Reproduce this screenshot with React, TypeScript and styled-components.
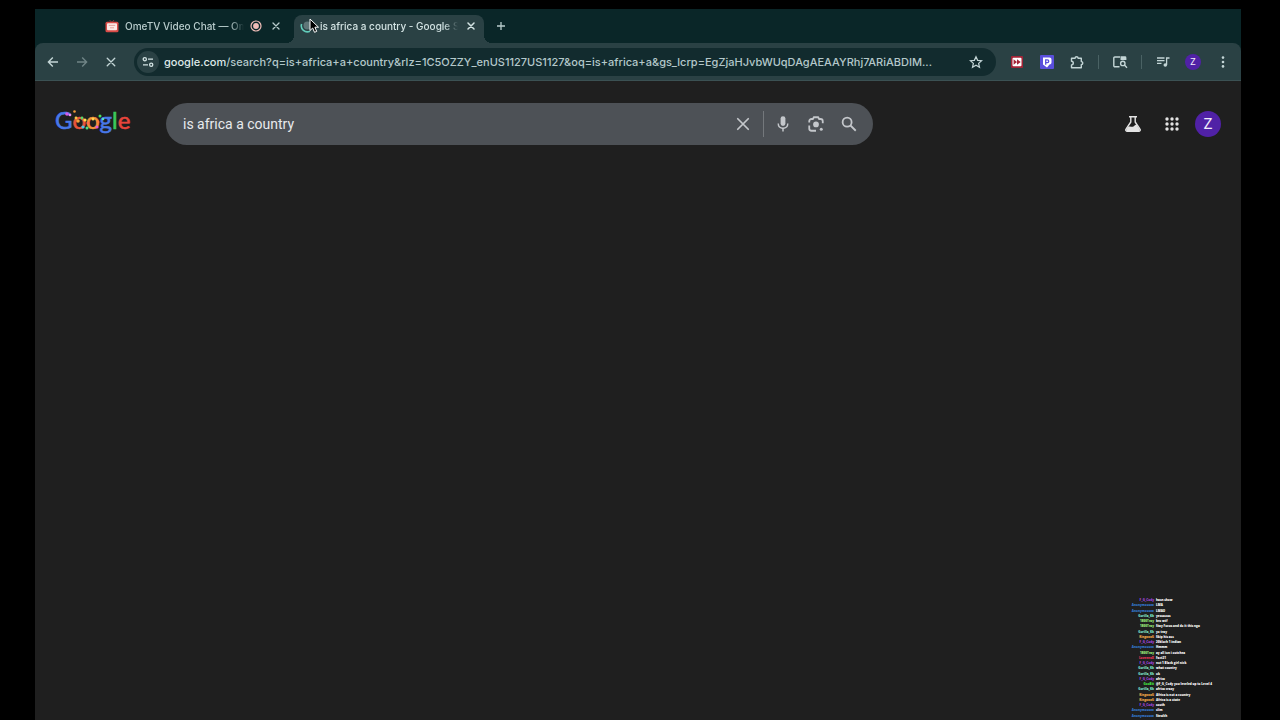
import React from "react";
import styled, { createGlobalStyle, css } from "styled-components";

const Global = createGlobalStyle`
  * { box-sizing: border-box; }
  html, body { margin: 0; background: #000; }
  body { font-family: Inter, "Liberation Sans", sans-serif; }
  button, input { font: inherit; color: inherit; border: 0; padding: 0; margin: 0; background: none; }
  button { cursor: pointer; }
  svg { display: block; flex: none; }
`;

const Screen = styled.div`
  position: relative;
  display: flex;
  flex-direction: column;
  min-height: 100vh;
  padding: 9px 39px 0 35px;
  overflow: hidden;
`;

const BrowserWindow = styled.div`
  flex: 1;
  display: flex;
  flex-direction: column;
  background: #0a2628;
`;

const TabStrip = styled.div`
  display: flex;
  height: 34px;
  padding: 6px 0 0 64px;
`;

const Tab = styled.div<{ $active?: boolean }>`
  position: relative;
  display: flex;
  align-items: center;
  width: 190px;
  padding: 0 5px 6px 6px;
  color: ${(p) => (p.$active ? "#d3e3e3" : "#b9cccc")};
  ${(p) =>
    p.$active
      ? css`
          margin-left: 5px;
          border-radius: 8px 8px 0 0;
          background: #2a4144;
          &::before,
          &::after {
            content: "";
            position: absolute;
            bottom: 0;
            width: 8px;
            height: 8px;
          }
          &::before {
            right: 100%;
            background: radial-gradient(circle at 0 0, transparent 8px, #2a4144 8px);
          }
          &::after {
            left: 100%;
            background: radial-gradient(circle at 100% 0, transparent 8px, #2a4144 8px);
          }
        `
      : ""}
`;

const TabTitle = styled.span<{ $gap?: number }>`
  flex: 1;
  min-width: 0;
  margin: 0 ${(p) => p.$gap ?? 0}px 0 6px;
  overflow: hidden;
  white-space: nowrap;
  font-size: 10px;
  font-weight: 500;
  line-height: 16px;
  mask-image: linear-gradient(to right, #000 calc(100% - 14px), transparent);
`;

const IconButton = styled.button<{ $w?: number; $dim?: boolean }>`
  display: flex;
  align-items: center;
  justify-content: center;
  width: ${(p) => p.$w ?? 20}px;
  height: 20px;
  flex: none;
  opacity: ${(p) => (p.$dim ? 0.45 : 1)};
`;

const NewTabButton = styled(IconButton)`
  width: 34px;
  height: 22px;
  color: #b9cccc;
`;

const Toolbar = styled.div`
  display: flex;
  align-items: center;
  height: 38px;
  padding: 0 8px;
  border-bottom: 1px solid #3b5153;
  border-radius: 8px 8px 0 0;
  background: #2a4144;
  color: #c3d5d6;
`;

const NavButtons = styled.div`
  display: flex;
  gap: 9px;
  margin-right: 13px;
`;

const AddressBar = styled.div`
  flex: 1;
  min-width: 0;
  display: flex;
  align-items: center;
  height: 28px;
  padding: 0 10px 0 3px;
  border-radius: 14px;
  background: #122b2e;
`;

const SiteInfo = styled.button`
  display: flex;
  align-items: center;
  justify-content: center;
  width: 22px;
  height: 22px;
  border-radius: 50%;
  background: #2a4144;
  flex: none;
`;

const Url = styled.span`
  flex: 1;
  min-width: 0;
  margin: 0 6px 0 5px;
  overflow: hidden;
  white-space: nowrap;
  font-size: 11px;
  font-weight: 500;
  line-height: 18px;
  color: #b4c8ca;
  b { font-weight: 500; color: #dfe9e9; }
`;

const Extensions = styled.div`
  display: flex;
  align-items: center;
  gap: 10px;
  margin-left: 11px;
`;

const ToolbarRule = styled.span`
  width: 1px;
  height: 14px;
  margin: 0 1px;
  background: #4a6264;
  flex: none;
`;

const Avatar = styled.button<{ $large?: boolean }>`
  width: ${(p) => (p.$large ? 26 : 16)}px;
  height: ${(p) => (p.$large ? 26 : 16)}px;
  margin: ${(p) => (p.$large ? "0" : "0 2px")};
  border-radius: 50%;
  background: #5021a6;
  color: #f1ecfa;
  font-family: Roboto, "Liberation Sans", sans-serif;
  font-size: ${(p) => (p.$large ? 15 : 9)}px;
  text-align: center;
  flex: none;
`;

const Page = styled.main`
  flex: 1;
  background: #1f1f1f;
`;

const SearchHeader = styled.header`
  display: flex;
  align-items: center;
  padding: 22px 20px 0 20px;
`;

const LogoLink = styled.a`
  width: 80px;
  margin-right: 31px;
  flex: none;
`;

const SearchForm = styled.form`
  display: flex;
  align-items: center;
  flex: 0 1 707px;
  min-width: 0;
  height: 42px;
  padding: 0 14px 0 17px;
  border-radius: 21px;
  background: #4d5156;
  color: #c4c7cb;
`;

const SearchInput = styled.input`
  flex: 1;
  min-width: 0;
  font-family: Roboto, "Liberation Sans", sans-serif;
  font-size: 14px;
  line-height: 20px;
  color: #e8eaed;
  outline: none;
`;

const ClearGroup = styled.div`
  display: flex;
  align-items: center;
  padding-right: 10px;
  margin-right: 9px;
  border-right: 1px solid #74787c;
  height: 26px;
`;

const SearchTools = styled.div`
  display: flex;
  align-items: center;
  gap: 13px;
`;

const Account = styled.div`
  display: flex;
  align-items: center;
  gap: 11px;
  margin-left: auto;
  color: #e3e3e3;
`;

const Chat = styled.div`
  position: absolute;
  right: 40px;
  bottom: 1px;
  display: grid;
  grid-template-columns: 54px 84px;
  grid-template-rows: repeat(23, 1fr);
  column-gap: 2px;
  width: 140px;
  height: 121px;
  font-family: "Open Sans", sans-serif;
  font-size: 3px;
  font-weight: 800;
  line-height: 5px;
  white-space: nowrap;
`;

const ChatName = styled.span<{ $c: string }>`
  text-align: right;
  color: ${(p) => p.$c};
`;

const ChatText = styled.span`
  color: #fff;
`;

const Cursor = styled.svg`
  position: absolute;
  left: 309px;
  top: 18px;
`;

const purple = "#a848e0";
const blue = "#3478d4";
const teal = "#7fe8d0";
const green = "#9bee7a";
const orange = "#f8a848";
const red = "#f0385a";
const lime = "#43f043";

const messages: [string, string, string][] = [
  ["F_G_Cody", "hasn show", purple],
  ["Anonymousxx", "LMA", blue],
  ["Anonymousxx", "LMAO", blue],
  ["Gorilla_Kb", "yesssssss", teal],
  ["1800Tray", "bro wtf", green],
  ["1800Tray", "Stay Focus and do it this nga", green],
  ["Gorilla_Kb", "yo tray", teal],
  ["KingxxxG", "Skip his ass", orange],
  ["F_G_Cody", "20bloch 1 indian", purple],
  ["Anonymousxx", "Hmmm", blue],
  ["1800Tray", "ay all ion i outchea", green],
  ["LoveeexX", "Fact21", red],
  ["F_G_Cody", "not 1 Black girl nick", purple],
  ["Gorilla_Kb", "what country", teal],
  ["Gorilla_Kb", "ok", teal],
  ["F_G_Cody", "africa", purple],
  ["GooBit", "@F_G_Cody you leveled up to Level 4", lime],
  ["Gorilla_Kb", "africa crazy", teal],
  ["KingxxxG", "Africa is not a country", orange],
  ["KingxxxG", "Africa is a state", orange],
  ["F_G_Cody", "south", purple],
  ["Anonymousxx", "slim", blue],
  ["Anonymousxx", "Stealth", blue],
];

const Close = ({ size = 8, w = 1.3 }: { size?: number; w?: number }) => (
  <svg width={size} height={size} viewBox="0 0 8 8" fill="none" stroke="currentColor" strokeWidth={w} strokeLinecap="round">
    <path d="M1 1l6 6M7 1L1 7" />
  </svg>
);

const Arrow = ({ flip }: { flip?: boolean }) => (
  <svg width="12" height="12" viewBox="0 0 12 12" fill="none" stroke="currentColor" strokeWidth="1.4">
    <path d={flip ? "M1 6h9.4M6.2 1.6L10.6 6l-4.4 4.4" : "M11 6H1.6M5.8 1.6L1.4 6l4.4 4.4"} />
  </svg>
);

const Dots = () => (
  <svg width="4" height="14" viewBox="0 0 4 14" fill="currentColor">
    <circle cx="2" cy="2.6" r="1.3" />
    <circle cx="2" cy="7" r="1.3" />
    <circle cx="2" cy="11.4" r="1.3" />
  </svg>
);

const sparks: [number, number, number, string][] = [
  [12, 6, 1.8, "#d65ae8"],
  [15, 7, 1.3, "#f08cf0"],
  [19.5, 3.5, 1.3, "#f39a3a"],
  [21, 10, 1.4, "#f5c542"],
  [23, 13, 1.8, "#f5a03a"],
  [27, 10, 1.4, "#5ad86a"],
  [30, 12, 1.6, "#ffe14d"],
  [28, 19, 1.6, "#49c7e8"],
  [33, 15, 1.5, "#ff6a4d"],
  [32, 20, 1.5, "#4de07a"],
  [38, 11, 1.5, "#ffd24d"],
  [42, 19, 1.6, "#e85ad0"],
  [45, 8, 1.5, "#4de05a"],
  [48, 11, 1.3, "#59e0c0"],
  [43, 14, 1.4, "#ff7a3a"],
];

const Logo = () => (
  <svg width="80" height="32" viewBox="0 0 80 32" role="img" aria-label="Google">
    <text x="0" y="21" fontFamily="Lato, sans-serif" fontSize="24" fill="#4878e8" stroke="#4878e8" strokeWidth="0.6">
      G<tspan fill="#e8553c" stroke="#e8553c">o</tspan>
      <tspan fill="#f3923a" stroke="#f3923a">o</tspan>
      <tspan>g</tspan>
      <tspan fill="#3cc95a" stroke="#3cc95a">l</tspan>
      <tspan fill="#e8453c" stroke="#e8453c">e</tspan>
    </text>
    {sparks.map(([x, y, r, c], i) => (
      <circle key={i} cx={x} cy={y} r={r} fill={c} />
    ))}
  </svg>
);

export default function App() {
  return (
    <>
      <Global />
      <Screen>
        <BrowserWindow>
          <TabStrip>
            <Tab>
              <svg width="14" height="14" viewBox="0 0 14 14">
                <path d="M4.5 1L7 3.5 9 1" stroke="#8a3434" fill="none" />
                <rect x="0.5" y="2.8" width="13" height="10.4" rx="1.5" fill="#d94b47" />
                <rect x="2" y="4.2" width="10" height="7" rx="1" fill="#fbe9e6" />
                <path d="M3.8 6.4h6.4M5 8.8h4" stroke="#e09a94" strokeWidth="0.9" />
              </svg>
              <TabTitle>OmeTV Video Chat — OmeTV</TabTitle>
              <IconButton $w={24} aria-label="Tab is recording">
                <svg width="12" height="12" viewBox="0 0 12 12">
                  <circle cx="6" cy="6" r="5" fill="none" stroke="#f0bdb8" strokeWidth="1.2" />
                  <circle cx="6" cy="6" r="2.9" fill="#f0bdb8" />
                </svg>
              </IconButton>
              <IconButton $w={16} aria-label="Close tab"><Close /></IconButton>
            </Tab>
            <Tab $active>
              <svg width="14" height="14" viewBox="0 0 14 14" fill="none">
                <circle cx="7.5" cy="6.5" r="4" fill="#5f7678" />
                <path d="M1.6 5A6 6 0 0 0 10 12.2" stroke="#62cdbb" strokeWidth="1.6" />
              </svg>
              <TabTitle $gap={5}>is africa a country - Google Search</TabTitle>
              <IconButton $w={16} aria-label="Close tab"><Close w={1.5} /></IconButton>
            </Tab>
            <NewTabButton aria-label="New tab">
              <svg width="10" height="10" viewBox="0 0 10 10" stroke="currentColor" strokeWidth="1.3"><path d="M5 1v8M1 5h8" /></svg>
            </NewTabButton>
          </TabStrip>
          <Toolbar>
            <NavButtons>
              <IconButton aria-label="Back"><Arrow /></IconButton>
              <IconButton aria-label="Forward" $dim><Arrow flip /></IconButton>
              <IconButton aria-label="Stop"><Close size={10} w={1.1} /></IconButton>
            </NavButtons>
            <AddressBar>
              <SiteInfo aria-label="View site information">
                <svg width="12" height="12" viewBox="0 0 12 12" fill="none" stroke="#d3e3e3" strokeWidth="1.3">
                  <circle cx="2.8" cy="3.2" r="1.6" /><path d="M6 3.2h5M1 8.8h5" /><circle cx="9.2" cy="8.8" r="1.6" />
                </svg>
              </SiteInfo>
              <Url><b>google.com</b>/search?q=is+africa+a+country&amp;rlz=1C5OZZY_enUS1127US1127&amp;oq=is+africa+a&amp;gs_lcrp=EgZjaHJvbWUqDAgAEAAYRhj7ARiABDIM...</Url>
              <IconButton aria-label="Bookmark this tab">
                <svg width="14" height="14" viewBox="0 0 24 24" fill="none" stroke="currentColor" strokeWidth="2.1">
                  <path d="M12 2.8l2.8 6.3 6.9.7-5.2 4.6 1.5 6.8-6-3.6-6 3.6 1.5-6.8-5.2-4.6 6.9-.7z" />
                </svg>
              </IconButton>
            </AddressBar>
            <Extensions>
              <IconButton aria-label="Fast forward extension">
                <svg width="12" height="12" viewBox="0 0 12 12">
                  <rect width="12" height="12" rx="1" fill="#a32437" /><rect x="1.5" y="1.8" width="9" height="8.4" rx="1" fill="#fff" />
                  <path d="M2.6 3.3L6 6 2.6 8.7zM6 3.3L9.7 6 6 8.7z" fill="#a32437" />
                </svg>
              </IconButton>
              <IconButton aria-label="P extension">
                <svg width="14" height="14" viewBox="0 0 14 14">
                  <rect width="14" height="14" rx="1" fill="#5a4fdc" />
                  <path d="M3 2.5h6.5a2 2 0 0 1 2 2v3a2 2 0 0 1-2 2L7 12.5 3 9.5z" fill="#fff" />
                  <path d="M5.7 9.8V4.9h1.7a1.3 1.3 0 0 1 0 2.7H5.7" fill="none" stroke="#5a4fdc" strokeWidth="1.3" />
                </svg>
              </IconButton>
              <IconButton aria-label="Extensions">
                <svg width="14" height="14" viewBox="0 0 14 14" fill="none" stroke="currentColor" strokeWidth="1.4" strokeLinejoin="round">
                  <path d="M1.5 3.2h3.6a1.5 1.5 0 0 1 3 0h3.2v3.4a1.5 1.5 0 0 1 0 3v3.1H1.5V9.9a1.8 1.8 0 0 0 0-3.6z" />
                </svg>
              </IconButton>
              <ToolbarRule />
              <IconButton aria-label="Side panel search">
                <svg width="16" height="14" viewBox="0 0 16 14" fill="none" stroke="currentColor" strokeWidth="1.4">
                  <path d="M7.5 11.8H2.8a1 1 0 0 1-1-1V3a1 1 0 0 1 1-1H8" /><path d="M8.5 1.3H13a1.4 1.4 0 0 1 1.4 1.4V5H8.5z" fill="currentColor" stroke="none" />
                  <circle cx="10.8" cy="8.4" r="2.2" /><path d="M12.4 10l2.6 2.7" />
                </svg>
              </IconButton>
              <ToolbarRule />
              <IconButton aria-label="Media controls">
                <svg width="14" height="12" viewBox="0 0 14 12" fill="none" stroke="currentColor" strokeWidth="1.3">
                  <path d="M1 2h7.5M1 4.7h7.5M1 7.4h4.5M10.6 9V2H13.5" /><circle cx="9.3" cy="9" r="1.8" fill="currentColor" stroke="none" />
                </svg>
              </IconButton>
              <Avatar aria-label="Profile">Z</Avatar>
              <IconButton aria-label="Menu"><Dots /></IconButton>
            </Extensions>
          </Toolbar>
          <Page>
            <SearchHeader>
              <LogoLink href="#"><Logo /></LogoLink>
              <SearchForm role="search" onSubmit={(e) => e.preventDefault()}>
                <SearchInput aria-label="Search" defaultValue="is africa a country" />
                <ClearGroup>
                  <IconButton type="reset" aria-label="Clear"><Close size={14} w={1} /></IconButton>
                </ClearGroup>
                <SearchTools>
                  <IconButton type="button" aria-label="Search by voice">
                    <svg width="18" height="18" viewBox="0 0 24 24" fill="currentColor">
                      <path d="M12 14.5a3.2 3.2 0 0 0 3.2-3.2V4.7a3.2 3.2 0 0 0-6.4 0v6.6A3.2 3.2 0 0 0 12 14.5z" />
                      <path d="M17.4 11.3a5.4 5.4 0 0 1-10.8 0H4.7a7.3 7.3 0 0 0 6.3 7.2V22h2v-3.5a7.3 7.3 0 0 0 6.3-7.2z" />
                    </svg>
                  </IconButton>
                  <IconButton type="button" aria-label="Search by image">
                    <svg width="18" height="18" viewBox="0 0 24 24" fill="none" stroke="currentColor" strokeWidth="2.4">
                      <path d="M3 10V8.3A3 3 0 0 1 6 5.3h1.8L9.2 3h5.6l1.4 2.3H18a3 3 0 0 1 3 3V11M3 14v4a3 3 0 0 0 3 3h6" />
                      <circle cx="12" cy="12.5" r="3.8" fill="currentColor" stroke="none" /><circle cx="19" cy="19" r="2" fill="currentColor" stroke="none" />
                    </svg>
                  </IconButton>
                  <IconButton aria-label="Search">
                    <svg width="18" height="18" viewBox="0 0 24 24" fill="none" stroke="currentColor" strokeWidth="2.4"><circle cx="9.5" cy="9.5" r="6" /><path d="M14 14l7 7" /></svg>
                  </IconButton>
                </SearchTools>
              </SearchForm>
              <Account>
                <IconButton aria-label="Search Labs" $w={32}>
                  <svg width="18" height="18" viewBox="0 0 18 18" fill="none" stroke="currentColor" strokeWidth="1.4" strokeLinejoin="round">
                    <path d="M5 1.8h8M6.8 2v5L2 14.2a1.2 1.2 0 0 0 1 2h12a1.2 1.2 0 0 0 1-2L11.2 7V2" /><path d="M4 12c2.5-1.5 3.5.6 5.5-.5 1.2-.8 1.8-2 3-2l3.5 5.500-1 1.200H3L2 15z" fill="currentColor" stroke="none" />
                  </svg>
                </IconButton>
                <IconButton aria-label="Google apps" $w={24}>
                  <svg width="14" height="14" viewBox="0 0 14 14" fill="currentColor">
                    {[2, 7, 12].map((y) => [2, 7, 12].map((x) => <circle key={`${x}-${y}`} cx={x} cy={y} r="1.7" />))}
                  </svg>
                </IconButton>
                <Avatar $large aria-label="Google account">Z</Avatar>
              </Account>
            </SearchHeader>
          </Page>
        </BrowserWindow>
        <Chat>
          {messages.map(([name, text, c], i) => (
            <React.Fragment key={i}>
              <ChatName $c={c}>{name}</ChatName>
              <ChatText>{text}</ChatText>
            </React.Fragment>
          ))}
        </Chat>
        <Cursor width="11" height="16" viewBox="0 0 11 16">
          <path d="M1 1v11.5l2.7-2.5 1.8 4.3 2.2-.9-1.8-4.2h3.6z" fill="#000" stroke="#fff" />
        </Cursor>
      </Screen>
    </>
  );
}
